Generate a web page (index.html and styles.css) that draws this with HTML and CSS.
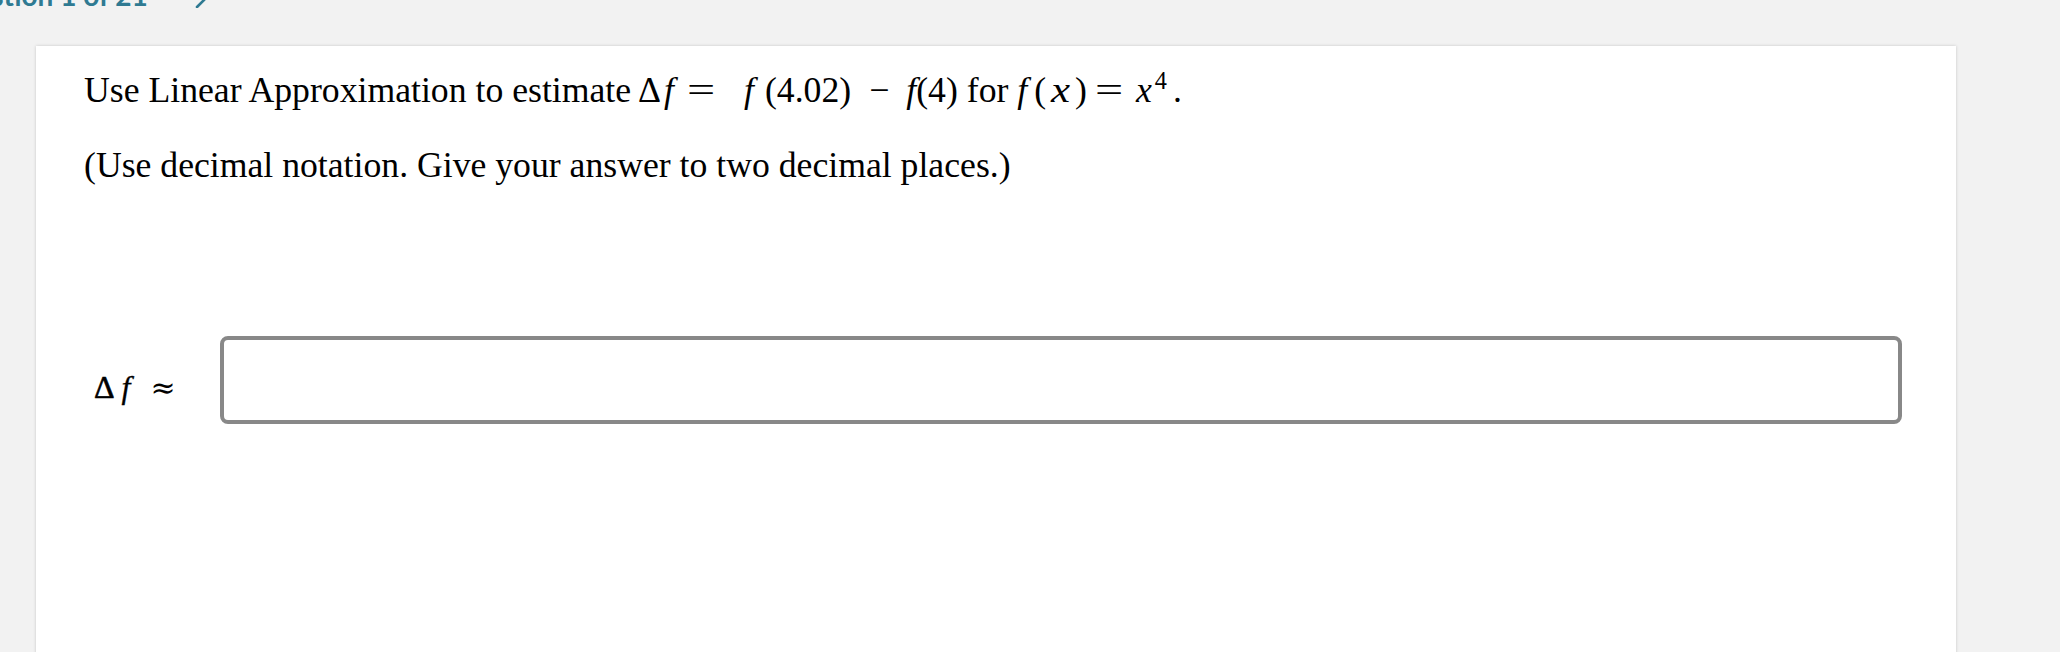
FILE: index.html
```html
<!DOCTYPE html>
<html lang="en">
<head>
<meta charset="utf-8">
<title>Question 1 of 21</title>
<link rel="stylesheet" href="styles.css">
</head>
<body>
<div class="topbar">
  <span class="qnum">Question 1 of 21</span>
  <svg class="chev" width="14" height="18" viewBox="0 0 14 18"><polyline points="2,1 10,9 2,17" fill="none" stroke="#2f7a92" stroke-width="2.6" stroke-linecap="round" stroke-linejoin="round"/></svg>
</div>
<main class="card">
  <p class="q">Use Linear Approximation to estimate <span class="m"><span class="delta">Δ</span><i class="fa">f</i><span class="rel r1">=</span><i class="fb">f</i><span class="sp"></span>(4.02)<span class="bin">−</span><i class="fc">f</i>(4)</span> for <span class="m"><i class="fd">f</i>(<i class="xa">x</i>)<span class="rel r2">=</span><i>x</i><sup>4</sup></span>.</p>
  <p class="q">(Use decimal notation. Give your answer to two decimal places.)</p>
  <div class="answer">
    <label class="lbl" for="ans"><span class="m"><span class="ldelta">Δ</span><i class="lf">f</i></span><span class="approx">≈</span></label>
    <input id="ans" class="field" type="text">
  </div>
</main>
</body>
</html>
```
FILE: styles.css
```css
html, body {
  margin: 0;
  padding: 0;
  background: #f2f2f2;
  height: 100%;
  overflow: hidden;
}
.topbar {
  height: 46px;
  display: flex;
  align-items: flex-start;
  overflow: hidden;
}
.qnum {
  font-family: Lato, "Liberation Sans", sans-serif;
  font-weight: 700;
  font-size: 28px;
  line-height: 28px;
  color: #2f7a92;
  margin-top: -19px;
  margin-left: -62px;
  white-space: nowrap;
}
.chev {
  margin-top: -10px;
  margin-left: 47px;
  flex: none;
}
.card {
  margin-left: 36px;
  width: 1920px;
  height: 620px;
  background: #fff;
  box-shadow: 0 0 3px rgba(0,0,0,0.18);
  padding: 24px 55px 0 48px;
  box-sizing: border-box;
  font-family: "Liberation Serif", "Times New Roman", serif;
  color: #000;
}
.q {
  margin: 0 0 34px 0;
  font-size: 35.7px;
  line-height: 41px;
  white-space: nowrap;
}
.m i {
  font-style: italic;
}
.delta {
  display: inline-block;
  margin-left: -2px;
}
.fa {
  margin-left: 3px;
}
.rel {
  display: inline-block;
  transform: scaleX(1.4);
}
.r1 {
  margin: 0 33px 0 17px;
}
.r2 {
  margin: 0 17px 0 12px;
}
.sp {
  display: inline-block;
  width: 11px;
}
.bin {
  margin: 0 17px 0 18px;
}
.fd {
  margin-right: 7px;
}
.xa {
  display: inline-block;
  transform: scaleX(1.2);
  transform-origin: left center;
  margin: 0 8px 0 5px;
}
sup {
  font-size: 0.68em;
  line-height: 0;
  vertical-align: 0.55em;
  margin: 0 6px 0 3px;
}
.answer {
  display: flex;
  align-items: flex-start;
  margin-top: 150px;
  padding-left: 10px;
}
.lbl {
  flex: 0 0 126px;
  font-size: 32px;
  line-height: 34px;
  padding-top: 34px;
  white-space: nowrap;
}
.ldelta {
  display: inline-block;
  margin-right: 7px;
  -webkit-text-stroke: 0.6px #000;
}
.lf {
  -webkit-text-stroke: 0.3px #000;
}
.approx {
  font-family: "DejaVu Serif", serif;
  font-size: 30px;
  margin-left: 20px;
}
.field {
  flex: none;
  width: 1682px;
  height: 88px;
  box-sizing: border-box;
  border: 4px solid #888888;
  border-radius: 8px;
  background: #fff;
  margin: 0;
  padding: 0 12px;
  font-size: 30px;
  outline: none;
}
```
